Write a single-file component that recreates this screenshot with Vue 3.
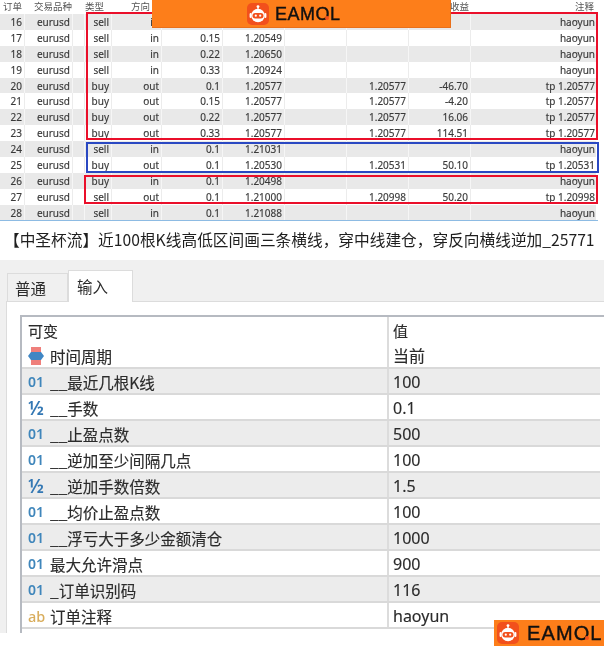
<script setup>
const heads = [
  ['订单', 'h-order'], ['交易品种', 'h-sym'], ['', ''], ['类型', 'h-type'], ['方向', 'h-dir'],
  ['', ''], ['', ''], ['', ''], ['', ''], ['收益', 'h-pro'], ['注释', 'h-note']
]
const trades = [
  ['16', 'sell', 'in', '', '', '', '', 'haoyun'],
  ['17', 'sell', 'in', '0.15', '1.20549', '', '', 'haoyun'],
  ['18', 'sell', 'in', '0.22', '1.20650', '', '', 'haoyun'],
  ['19', 'sell', 'in', '0.33', '1.20924', '', '', 'haoyun'],
  ['20', 'buy', 'out', '0.1', '1.20577', '1.20577', '-46.70', 'tp 1.20577'],
  ['21', 'buy', 'out', '0.15', '1.20577', '1.20577', '-4.20', 'tp 1.20577'],
  ['22', 'buy', 'out', '0.22', '1.20577', '1.20577', '16.06', 'tp 1.20577'],
  ['23', 'buy', 'out', '0.33', '1.20577', '1.20577', '114.51', 'tp 1.20577'],
  ['24', 'sell', 'in', '0.1', '1.21031', '', '', 'haoyun'],
  ['25', 'buy', 'out', '0.1', '1.20530', '1.20531', '50.10', 'tp 1.20531'],
  ['26', 'buy', 'in', '0.1', '1.20498', '', '', 'haoyun'],
  ['27', 'sell', 'out', '0.1', '1.21000', '1.20998', '50.20', 'tp 1.20998'],
  ['28', 'sell', 'in', '0.1', '1.21088', '', '', 'haoyun']
]
const params = [
  ['01', '__最近几根K线', '100', 'int'],
  ['½', '__手数', '0.1', 'frac'],
  ['01', '__止盈点数', '500', 'int'],
  ['01', '__逆加至少间隔几点', '100', 'int'],
  ['½', '__逆加手数倍数', '1.5', 'frac'],
  ['01', '__均价止盈点数', '100', 'int'],
  ['01', '__浮亏大于多少金额清仓', '1000', 'int'],
  ['01', '最大允许滑点', '900', 'int'],
  ['01', '_订单识别码', '116', 'int'],
  ['ab', '订单注释', 'haoyun', 'str']
]
</script>

<template>
  <div class="page">
    <section class="trades">
      <div class="trow head">
        <span v-for="(h, i) in heads" :key="i" :class="['cell', h[1]]">{{ h[0] }}</span>
      </div>
      <div v-for="(t, i) in trades" :key="t[0]" :class="['trow', i % 2 === 0 ? 'even' : 'odd']">
        <span class="cell">{{ t[0] }}</span>
        <span class="cell">eurusd</span>
        <span class="cell"></span>
        <span class="cell">{{ t[1] }}</span>
        <span class="cell">{{ t[2] }}</span>
        <span class="cell">{{ t[3] }}</span>
        <span class="cell">{{ t[4] }}</span>
        <span class="cell"></span>
        <span class="cell">{{ t[5] }}</span>
        <span class="cell">{{ t[6] }}</span>
        <span class="cell note">{{ t[7] }}</span>
      </div>
      <div class="mark red mark-a"></div>
      <div class="mark blue mark-b"></div>
      <div class="mark red mark-c"></div>
      <div class="rule"></div>
    </section>

    <h1 class="title">【中圣杯流】近100根K线高低区间画三条横线，穿中线建仓，穿反向横线逆加_25771</h1>

    <section class="settings">
      <div class="tabs">
        <span class="tab">普通</span>
        <span class="tab active">输入</span>
      </div>
      <div class="panel">
        <div class="grid">
          <div class="prow header">
            <span class="pname">可变</span>
            <span class="pval">值</span>
          </div>
          <div class="prow first">
            <span class="pname">
              <svg class="tf" width="16" height="18" viewBox="0 0 16 18">
                <rect x="3" y="0" width="10" height="5" fill="#ef7f7b" />
                <rect x="3" y="13" width="10" height="5" fill="#ef7f7b" />
                <path d="M3 5h10l3 4-3 4H3L0 9z" fill="#3f86c4" />
              </svg>
              <span class="plabel">时间周期</span>
            </span>
            <span class="pval">当前</span>
          </div>
          <div v-for="(p, i) in params" :key="p[1]" :class="['prow', i % 2 === 0 ? 'band' : '']">
            <span class="pname">
              <span :class="['ico', p[3]]">{{ p[0] }}</span>
              <span class="plabel">{{ p[1] }}</span>
            </span>
            <span class="pval">{{ p[2] }}</span>
          </div>
        </div>
      </div>
    </section>

    <div class="brand top">
      <svg class="bot" width="22" height="22" viewBox="0 0 22 22">
        <rect width="22" height="22" rx="5" fill="#f2501c" />
        <circle cx="11" cy="3.6" r="1.4" fill="#fff" />
        <rect x="10.4" y="4" width="1.2" height="3" fill="#fff" />
        <rect x="2.6" y="10" width="2" height="5" rx="1" fill="#fff" />
        <rect x="17.4" y="10" width="2" height="5" rx="1" fill="#fff" />
        <circle cx="11" cy="12.5" r="6.8" fill="#fff" />
        <rect x="5.5" y="10" width="11" height="5.4" rx="2.7" fill="#f2501c" />
        <circle cx="8.8" cy="12.7" r="1.1" fill="#fff" />
        <circle cx="13.2" cy="12.7" r="1.1" fill="#fff" />
      </svg>
      <span class="word">EAM<span class="o">O</span>L</span>
    </div>

    <div class="brand bottom">
      <svg class="bot" width="22" height="22" viewBox="0 0 22 22">
        <rect width="22" height="22" rx="5" fill="#f2501c" />
        <circle cx="11" cy="3.6" r="1.4" fill="#fff" />
        <rect x="10.4" y="4" width="1.2" height="3" fill="#fff" />
        <rect x="2.6" y="10" width="2" height="5" rx="1" fill="#fff" />
        <rect x="17.4" y="10" width="2" height="5" rx="1" fill="#fff" />
        <circle cx="11" cy="12.5" r="6.8" fill="#fff" />
        <rect x="5.5" y="10" width="11" height="5.4" rx="2.7" fill="#f2501c" />
        <circle cx="8.8" cy="12.7" r="1.1" fill="#fff" />
        <circle cx="13.2" cy="12.7" r="1.1" fill="#fff" />
      </svg>
      <span class="word">EAM<span class="o">O</span>L</span>
    </div>
  </div>
</template>

<style>
html, body { margin: 0; background: #fff; }
</style>

<style scoped>
.page {
  position: relative;
  width: 604px;
  height: 646px;
  overflow: hidden;
  background: #fff;
  filter: blur(0.35px);
  font-family: "Noto Sans", "Noto Sans CJK SC", sans-serif;
  color: #2b2b2b;
}

/* trade history */
.trades { position: relative; width: 604px; height: 221px; padding-top: 14px; box-sizing: border-box; }
.trow {
  display: grid;
  grid-template-columns: 25px 48px 12px 27px 50px 61px 62px 62px 62px 62px 125px;
  width: 596px;
  height: 15.9px;
  font-size: 10px;
  line-height: 17px;
  color: #3a3a3a;
  -webkit-text-stroke: 0.15px #3a3a3a;
}
.head { position: absolute; top: 0; left: 0; height: 14px; font-size: 9.5px; line-height: 14px; color: #555; -webkit-text-stroke: 0; }
.even { background: #e9e9e9; }
.cell {
  text-align: right;
  padding-right: 2px;
  box-sizing: border-box;
  border-right: 1px solid #ececec;
  white-space: nowrap;
  overflow: hidden;
}
.even .cell { border-right-color: #f6f6f6; }
.head .cell { border-right: 0; }
.h-order { padding-right: 3px; }
.h-sym { padding-right: 1px; }
.h-type { padding-right: 11px; }
.h-dir { padding-right: 12px; }
.note { padding-right: 1px; border-right: 0; }
.mark { position: absolute; box-sizing: border-box; border-width: 2px; border-style: solid; }
.red { border-color: #ea0f2a; }
.blue { border-color: #2a48c2; }
.mark-a { left: 86px; top: 12px; width: 512px; height: 128px; }
.mark-b { left: 86px; top: 142px; width: 513px; height: 31px; }
.mark-c { left: 84px; top: 175px; width: 514px; height: 29px; }
.rule { position: absolute; left: 0; top: 220px; width: 598px; height: 1px; background: #8dbbe3; }

.title {
  margin: 0;
  height: 39px;
  padding-left: 4px;
  font-size: 15.7px;
  font-weight: 400;
  line-height: 37px;
  white-space: nowrap;
  color: #1f1f1f;
  font-family: "Noto Sans CJK SC", "Noto Sans", sans-serif;
}

/* settings dialog */
.settings {
  height: 373px;
  background: #f0f0f0;
  padding-top: 10px;
  box-sizing: border-box;
  display: flex;
  flex-direction: column;
}
.tabs { display: flex; align-items: flex-end; height: 32px; padding-left: 7px; margin-bottom: -1px; position: relative; z-index: 1; }
.tab {
  width: 61px;
  height: 29px;
  box-sizing: border-box;
  border: 1px solid #dcdcdc;
  border-bottom: 0;
  padding-left: 7px;
  font-size: 15.5px;
  line-height: 28px;
  font-family: "Noto Sans CJK SC", sans-serif;
}
.tab.active { width: 65px; height: 32px; background: #fff; line-height: 30px; border-bottom: 0; padding-left: 8px; }
.panel {
  flex: 1;
  margin-left: 6px;
  background: #fff;
  border-top: 1px solid #dcdcdc;
  border-left: 1px solid #dcdcdc;
  padding: 13px 0 0 13px;
  box-sizing: border-box;
}
.grid {
  height: 100%;
  border-top: 2px solid #b6bac1;
  border-left: 2px solid #b6bac1;
  box-sizing: border-box;
  padding-right: 4px;
}
.prow {
  display: grid;
  grid-template-columns: 367px 1fr;
  grid-template-rows: 100%;
  height: 26px;
  box-sizing: border-box;
  font-size: 15.5px;
  line-height: 26px;
  border-bottom: 2px solid #d9d9d9;
  -webkit-text-stroke: 0.15px #2b2b2b;
}
.header { height: 27px; border-bottom: 0; line-height: 27px; }
.first { height: 25px; line-height: 24px; }
.band { background: #ececec; }
.pname {
  display: flex;
  align-items: center;
  padding: 1px 0 0 6px;
  line-height: 20px;
  border-right: 2px solid #dcdcdc;
  font-family: "Noto Sans CJK SC", sans-serif;
  white-space: nowrap;
  overflow: hidden;
}
.first .pname { padding-top: 0; }
.header .pname { font-size: 15px; padding-top: 0; }
.pval { padding-left: 4px; font-size: 16px; }
.header .pval { font-family: "Noto Sans CJK SC", sans-serif; font-size: 15px; }
.tf { flex: none; margin-right: 6px; }
.ico {
  flex: none;
  width: 22px;
  font-family: "Noto Sans", sans-serif;
  font-size: 14px;
  font-weight: 600;
  color: #3f86bb;
  line-height: 20px;
  -webkit-text-stroke: 0;
}
.ico.frac { font-size: 19px; letter-spacing: -1px; color: #3478b4; }
.ico.str { color: #d9ad5c; font-size: 14.5px; font-weight: 500; }

/* watermark logos */
.brand { position: absolute; display: flex; align-items: center; }
.brand.top {
  left: 152px;
  top: 0;
  width: 299px;
  height: 28px;
  padding-left: 95px;
  box-sizing: border-box;
  background: #fd7e1a;
  border-right: 1px solid #e9701a;
  border-bottom: 1px solid #e9701a;
  gap: 6px;
}
.brand.bottom {
  left: 494px;
  top: 620px;
  width: 110px;
  height: 26px;
  padding-left: 3px;
  box-sizing: border-box;
  background: #fd7e1a;
  gap: 8px;
}
.word {
  font-family: "Liberation Sans", sans-serif;
  color: #111;
  font-size: 18px;
  line-height: 22px;
  letter-spacing: 0.5px;
  -webkit-text-stroke: 0.4px #111;
}
.bottom .word { font-size: 20px; letter-spacing: 1.1px; }
.o { position: relative; }
.o::after {
  content: "";
  position: absolute;
  right: 1px;
  bottom: 4px;
  width: 4px;
  height: 4px;
  border-radius: 50%;
  background: #f2501c;
}
</style>
